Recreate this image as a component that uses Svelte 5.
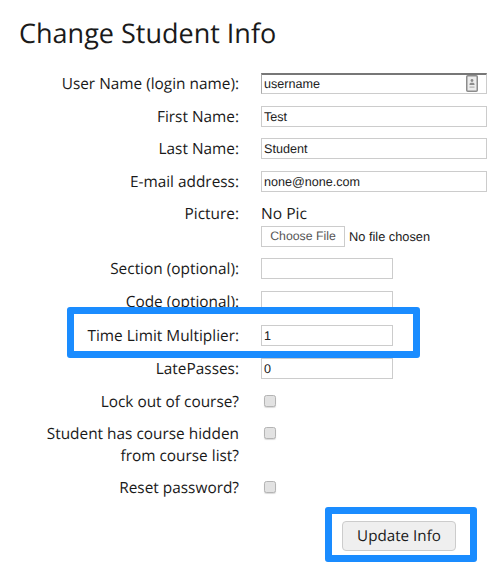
<script>
    const topRows = [
        { label: "First Name:", value: "Test" },
        { label: "Last Name:", value: "Student" },
        { label: "E-mail address:", value: "none@none.com" },
    ];
    const lowerRows = [
        { label: "Section (optional):", value: "", cls: "" },
        { label: "Code (optional):", value: "", cls: "" },
        { label: "Time Limit Multiplier:", value: "1", cls: "marked" },
        { label: "LatePasses:", value: "0", cls: "" },
    ];
    const checks = [
        { label: "Lock out of course?", cls: "" },
        { label: "Student has course hidden from course list?", cls: "tall" },
        { label: "Reset password?", cls: "last" },
    ];
</script>

<main class="page">
    <h1>Change Student Info</h1>

    <form class="form" onsubmit={(e) => e.preventDefault()}>
        <div class="row">
            <span class="label">User Name (login name):</span>
            <div class="field username">
                <input class="wide" type="text" value="username" />
                <svg class="key" width="12" height="17" viewBox="0 0 12 17">
                    <rect x="0.75" y="0.75" width="10.5" height="15.5" rx="1" fill="#ececec" stroke="#8c8c8c" stroke-width="1.5" />
                    <circle cx="6" cy="5.5" r="1.4" fill="#8c8c8c" />
                    <path d="M3.5 10 h5 v-1.2 l-1.2 -1 h-2.6 l-1.2 1 z" fill="#8c8c8c" />
                    <rect x="3.5" y="11.5" width="5" height="1.2" fill="#b0b0b0" />
                </svg>
            </div>
        </div>

        {#each topRows as r}
            <div class="row">
                <span class="label">{r.label}</span>
                <div class="field"><input class="wide" type="text" value={r.value} /></div>
            </div>
        {/each}

        <div class="row picture">
            <span class="label">Picture:</span>
            <div class="field">
                <div class="nopic">No Pic</div>
                <div class="file">
                    <span class="choose">Choose File</span>
                    <span class="chosen">No file chosen</span>
                </div>
            </div>
        </div>

        {#each lowerRows as r}
            <div class="row lower {r.cls}">
                <span class="label">{r.label}</span>
                <div class="field"><input class="short" type="text" value={r.value} /></div>
            </div>
        {/each}

        {#each checks as c}
            <div class="row check {c.cls}">
                <span class="label">{c.label}</span>
                <div class="field"><span class="box"></span></div>
            </div>
        {/each}

        <div class="submit"><button type="submit">Update Info</button></div>
    </form>

    <div class="mark mark-submit"></div>
</main>

<style>
    :global(body) {
        margin: 0;
        background: #fff;
    }

    .page {
        position: relative;
        width: 496px;
        height: 572px;
        overflow: hidden;
        font-family: "Open Sans", sans-serif;
        color: #1a1a1a;
        text-rendering: geometricPrecision;
    }

    h1 {
        margin: 0;
        padding: 13px 0 0 19px;
        font-size: 27px;
        line-height: 40px;
        font-weight: 400;
    }

    .form {
        padding-top: 20px;
    }

    .row {
        display: grid;
        grid-template-columns: 239px 1fr;
        column-gap: 22px;
        align-items: start;
        height: 32.5px;
        font-size: 15.4px;
    }

    .label {
        text-align: right;
        line-height: 21px;
    }

    .field {
        position: relative;
    }

    input {
        display: block;
        box-sizing: border-box;
        height: 21px;
        padding: 1px 2px 0;
        border: 1px solid #ccc;
        border-radius: 0;
        background: #fff;
        font-family: "Liberation Sans", Arial, sans-serif;
        font-size: 12.6px;
        color: #222;
        outline: none;
        text-rendering: geometricPrecision;
    }

    .wide {
        width: 226px;
    }

    .short {
        width: 132px;
    }

    .username input {
        border-top: 2px solid #777;
        border-left-color: #aaa;
        padding-top: 0;
    }

    .key {
        position: absolute;
        left: 205px;
        top: 2px;
    }

    .picture {
        height: 55px;
    }

    .nopic {
        font-size: 15.6px;
        line-height: 21px;
    }

    .file {
        display: flex;
        align-items: center;
        gap: 4px;
        margin-top: 2px;
        font-family: "Liberation Sans", Arial, sans-serif;
        font-size: 12.8px;
    }

    .choose {
        box-sizing: border-box;
        width: 84px;
        height: 21px;
        border: 1px solid #ccc;
        background: #fff;
        color: #555;
        font-size: 12.3px;
        text-align: center;
        line-height: 19px;
    }

    .lower {
        height: 33.3px;
    }

    /* the highlight frame sits behind this row and paints over the row above */
    .marked {
        position: relative;
    }

    .marked::before {
        content: "";
        position: absolute;
        left: 67px;
        top: -18px;
        box-sizing: border-box;
        width: 353px;
        height: 51px;
        border: 7px solid #1a8cff;
        border-radius: 3px;
        background: #fff;
    }

    .marked .label,
    .marked .field {
        position: relative;
    }

    .check {
        height: 32px;
    }

    .check.tall {
        height: 54px;
    }

    .check.last {
        height: 44px;
    }

    .check .label {
        line-height: 22px;
    }

    .tall .label {
        padding-left: 30px;
    }

    .box {
        display: block;
        box-sizing: border-box;
        width: 12px;
        height: 12px;
        margin: 4px 0 0 3px;
        border: 1px solid #b4b4b4;
        border-radius: 2.5px;
        background: #e2e2e2;
        box-shadow: 0 1px 1px rgba(0, 0, 0, 0.15);
    }

    .submit {
        display: flex;
        justify-content: flex-end;
        padding-right: 40px;
    }

    button {
        box-sizing: border-box;
        width: 114px;
        height: 30px;
        padding: 0 0 1px;
        border: 1px solid #ccc;
        border-radius: 4px;
        background: #efefef;
        font-family: "Open Sans", sans-serif;
        font-size: 15.2px;
        color: #1a1a1a;
        text-rendering: geometricPrecision;
    }

    .mark {
        position: absolute;
        box-sizing: border-box;
        border: 7px solid #1a8cff;
        border-radius: 3px;
        pointer-events: none;
    }

    .mark-submit {
        left: 325px;
        top: 507px;
        width: 152px;
        height: 55px;
    }
</style>
